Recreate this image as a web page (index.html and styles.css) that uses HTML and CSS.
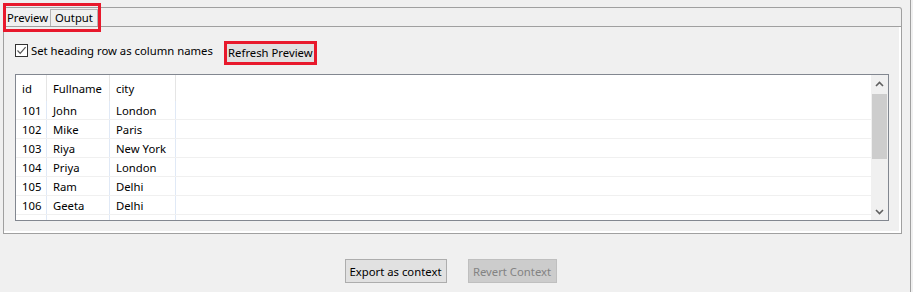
FILE: index.html
```html
<!DOCTYPE html>
<html>
<head>
<meta charset="utf-8">
<link rel="stylesheet" href="styles.css">
</head>
<body>
<div class="window">
  <div class="folder">
    <div class="strip">
      <div class="tabgroup">
        <div class="tab sel">Preview</div>
        <div class="tab">Output</div>
      </div>
    </div>
    <div class="panel">
      <div class="opts">
        <label class="chk">
          <span class="box"><svg width="11" height="11" viewBox="0 0 11 11"><path d="M1.5 5.5 L4.2 8.3 L9.6 2.2" fill="none" stroke="#555" stroke-width="1.2"/></svg></span>
          <span class="chk-text">Set heading row as column names</span>
        </label>
        <div class="marked"><button class="btn refresh">Refresh Preview</button></div>
      </div>
      <div class="table">
        <div class="grid">
          <div class="hrow">
            <div class="c c1">id</div><div class="c c2">Fullname</div><div class="c c3">city</div><div class="c c4"></div>
          </div>
          <div class="row"><div class="c c1">101</div><div class="c c2">John</div><div class="c c3">London</div><div class="c c4"></div></div>
          <div class="row"><div class="c c1">102</div><div class="c c2">Mike</div><div class="c c3">Paris</div><div class="c c4"></div></div>
          <div class="row"><div class="c c1">103</div><div class="c c2">Riya</div><div class="c c3">New York</div><div class="c c4"></div></div>
          <div class="row"><div class="c c1">104</div><div class="c c2">Priya</div><div class="c c3">London</div><div class="c c4"></div></div>
          <div class="row"><div class="c c1">105</div><div class="c c2">Ram</div><div class="c c3">Delhi</div><div class="c c4"></div></div>
          <div class="row"><div class="c c1">106</div><div class="c c2">Geeta</div><div class="c c3">Delhi</div><div class="c c4"></div></div>
          <div class="row"><div class="c c1"></div><div class="c c2"></div><div class="c c3"></div><div class="c c4"></div></div>
        </div>
        <div class="vscroll">
          <div class="arrow"><svg width="9" height="6" viewBox="0 0 9 6"><path d="M1 5 L4.5 1.5 L8 5" fill="none" stroke="#606060" stroke-width="1.6"/></svg></div>
          <div class="track"><div class="thumb"></div></div>
          <div class="arrow"><svg width="9" height="6" viewBox="0 0 9 6"><path d="M1 1 L4.5 4.5 L8 1" fill="none" stroke="#606060" stroke-width="1.6"/></svg></div>
        </div>
      </div>
    </div>
  </div>
  <div class="actions">
    <button class="btn export">Export as context</button>
    <button class="btn revert" disabled>Revert Context</button>
  </div>
</div>
</body>
</html>
```
FILE: styles.css
```css
html, body {
  margin: 0;
  padding: 0;
  background: #f0f0f0;
}
body {
  width: 913px;
  height: 292px;
  overflow: hidden;
  font-family: "Noto Sans", "Open Sans", sans-serif;
  font-size: 11.3px;
  color: #000;
}
.window {
  width: 911px;
  height: 292px;
  border-right: 1px solid #a0a0a0;
  padding-top: 7px;
  box-sizing: border-box;
}
.folder {
  margin-left: 3px;
  width: 899px;
}
.strip {
  height: 18px;
  border-top: 1px solid #a0a0a0;
  border-right: 1px solid #a0a0a0;
  border-bottom: 1px solid #a0a0a0;
  border-top-right-radius: 3px;
  display: flex;
  align-items: flex-end;
  padding-left: 3px;
}
.tabgroup {
  position: relative;
  display: flex;
  height: 17px;
}
.tabgroup::after {
  content: "";
  position: absolute;
  left: -3px;
  right: -3px;
  top: -6px;
  bottom: -6px;
  border: 3px solid #e8192c;
  pointer-events: none;
}
.tab {
  height: 17px;
  line-height: 17px;
  box-sizing: border-box;
  padding: 0 0 0 1px;
  white-space: nowrap;
}
.tab.sel {
  width: 44px;
}
.tab:not(.sel) {
  width: 48px;
  border: 1px solid #b4b4b4;
  border-bottom: none;
  padding-left: 4px;
  line-height: 16px;
}
.panel {
  height: 207px;
  box-sizing: border-box;
  border-left: 1px solid #a0a0a0;
  border-right: 1px solid #a0a0a0;
  border-bottom: 1px solid #a0a0a0;
  box-shadow: inset -2px -2px 0 #fff;
  padding: 14px 0 0 11px;
}
.opts {
  display: flex;
  align-items: flex-start;
  height: 24px;
}
.chk {
  display: flex;
  align-items: center;
  margin-top: 3px;
  height: 13px;
}
.box {
  width: 13px;
  height: 13px;
  box-sizing: border-box;
  border: 1px solid #333;
  background: #fff;
  display: flex;
  align-items: center;
  justify-content: center;
}
.chk-text {
  margin-left: 3px;
  line-height: 13px;
  white-space: nowrap;
}
.marked {
  margin-left: 11px;
  border: 3px solid #e8192c;
  display: flex;
}
.btn {
  font-family: inherit;
  font-size: 11.3px;
  color: #000;
  background: #e1e1e1;
  border: 1px solid #adadad;
  border-radius: 0;
  padding: 0;
  margin: 0;
  box-sizing: border-box;
  white-space: nowrap;
}
.refresh {
  width: 87px;
  height: 18px;
  line-height: 15px;
  padding-bottom: 1px;
  border-color: #e1e1e1;
}
.table {
  margin-top: 9px;
  width: 874px;
  height: 147px;
  box-sizing: border-box;
  border: 1px solid #828790;
  background: #fff;
  display: flex;
  overflow: hidden;
}
.grid {
  flex: 1;
  overflow: hidden;
}
.hrow, .row {
  display: flex;
}
.hrow {
  height: 26px;
}
.hrow .c {
  line-height: 26px;
  padding-top: 1px;
  border-right: 1px solid #e5e5e5;
}
.row {
  height: 19px;
  box-sizing: border-box;
  border-bottom: 1px solid #f0f0f0;
}
.row .c {
  line-height: 16px;
  padding-top: 2px;
  border-right: 1px solid #e0e9f6;
}
.c {
  box-sizing: border-box;
  padding-left: 6px;
  white-space: nowrap;
}
.c1 { width: 31px; }
.c2 { width: 63px; }
.c3 { width: 66px; }
.c4 { flex: 1; border-right: none !important; }
.vscroll {
  width: 17px;
  background: #f0f0f0;
  display: flex;
  flex-direction: column;
}
.arrow {
  height: 17px;
  display: flex;
  align-items: center;
  justify-content: center;
}
.track {
  flex: 1;
  padding-top: 2px;
}
.thumb {
  height: 65px;
  margin: 0 1px;
  background: #cdcdcd;
}
.actions {
  display: flex;
  justify-content: center;
  gap: 21px;
  margin-top: 25px;
  padding-right: 9px;
}
.export {
  width: 102px;
  height: 24px;
}
.revert {
  width: 89px;
  height: 24px;
  background: #cccccc;
  border-color: #bfbfbf;
  color: #838383;
}
```
